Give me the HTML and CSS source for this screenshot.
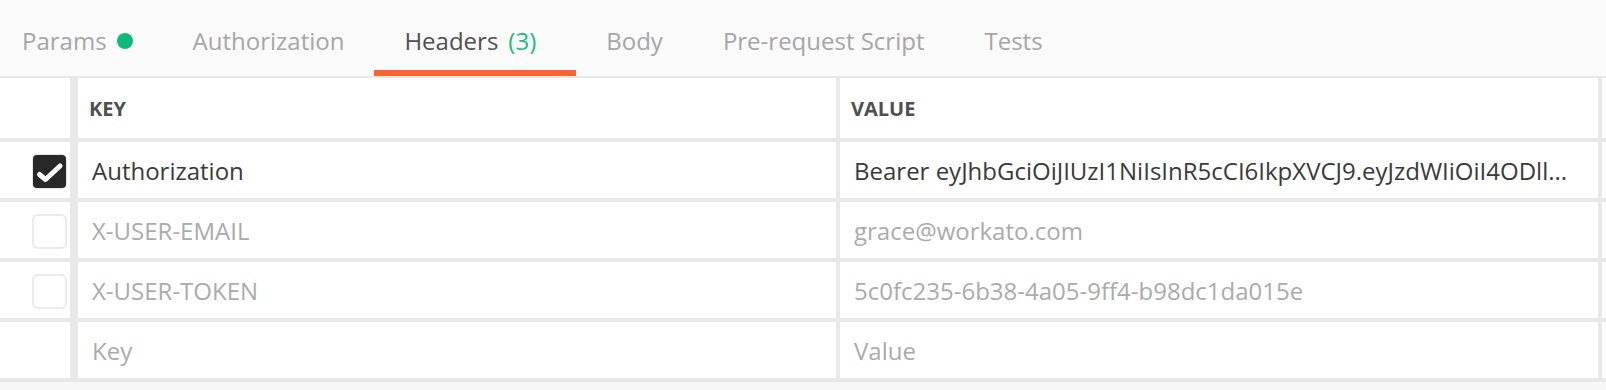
FILE: index.html
```html
<!DOCTYPE html>
<html lang="en">
<head>
<meta charset="utf-8">
<title>Headers</title>
<link rel="stylesheet" href="styles.css">
</head>
<body>
<div class="page">
  <nav class="tabs">
    <div class="tab tab-first">Params<span class="dot"></span></div>
    <div class="tab">Authorization</div>
    <div class="tab tab-active">Headers<span class="count">(3)</span></div>
    <div class="tab">Body</div>
    <div class="tab">Pre-request Script</div>
    <div class="tab">Tests</div>
  </nav>
  <div class="table">
    <div class="cell cell-check"></div>
    <div class="cell cell-head">KEY</div>
    <div class="cell cell-head cell-val">VALUE</div>
    <div class="cell"></div>

    <div class="cell cell-check"><span class="box box-on"><svg viewBox="0 0 33 33" width="33" height="33"><polyline points="6.5,19.5 12.5,24.5 27,11" fill="none" stroke="#fff" stroke-width="5" stroke-linecap="round" stroke-linejoin="round"/></svg></span></div>
    <div class="cell cell-text text-on">Authorization</div>
    <div class="cell cell-text cell-val text-on">Bearer eyJhbGciOiJIUzI1NiIsInR5cCI6IkpXVCJ9.eyJzdWIiOiI4ODll...</div>
    <div class="cell"></div>

    <div class="cell cell-check"><span class="box"></span></div>
    <div class="cell cell-text text-off">X-USER-EMAIL</div>
    <div class="cell cell-text cell-val text-off">grace@workato.com</div>
    <div class="cell"></div>

    <div class="cell cell-check"><span class="box"></span></div>
    <div class="cell cell-text text-off">X-USER-TOKEN</div>
    <div class="cell cell-text cell-val text-off">5c0fc235-6b38-4a05-9ff4-b98dc1da015e</div>
    <div class="cell"></div>

    <div class="cell cell-check"></div>
    <div class="cell cell-text text-off">Key</div>
    <div class="cell cell-text cell-val text-off">Value</div>
    <div class="cell"></div>
  </div>
</div>
</body>
</html>
```
FILE: styles.css
```css
html, body {
  margin: 0;
  padding: 0;
}
body {
  background: #f7f7f7;
  font-family: "Open Sans", "DejaVu Sans", sans-serif;
  overflow: hidden;
}
.page {
  width: 1606px;
  overflow: hidden;
}
.tabs {
  display: flex;
  height: 76px;
  background: #fafafa;
  border-bottom: 2px solid #e8e8e8;
}
.tab {
  box-sizing: border-box;
  height: 76px;
  padding: 25px 30px 0 30px;
  font-size: 24px;
  line-height: 32px;
  color: #a6a6a6;
  white-space: nowrap;
  display: flex;
  align-items: flex-start;
  border-bottom: 6px solid transparent;
}
.tab-first {
  padding-left: 22px;
}
.tab-active {
  color: #505050;
  border-bottom-color: #fb6330;
  padding-right: 40px;
}
.dot {
  width: 16px;
  height: 16px;
  border-radius: 50%;
  background: #0dba7c;
  margin: 8px 0 0 10px;
}
.count {
  color: #1fb982;
  margin-left: 10px;
}
.table {
  display: grid;
  grid-template-columns: 74px 758px 758px 200px;
  grid-template-rows: 60px 56px 56px 56px 56px;
  column-gap: 4px;
  row-gap: 4px;
  background: #e8e8e8;
  padding-bottom: 4px;
  width: 1802px;
}
.cell {
  background: #fff;
  display: flex;
  align-items: center;
  min-width: 0;
  overflow: hidden;
}
.cell-check {
  box-sizing: border-box;
  border-right: 4px solid #e8e8e8;
  padding-left: 32px;
}
.cell-head {
  font-size: 20px;
  font-weight: 700;
  color: #4f4f4f;
  padding-left: 11px;
}
.cell-text {
  font-size: 24px;
  padding-left: 14px;
  white-space: nowrap;
}
.text-on {
  color: #3a3a3a;
}
.text-off {
  color: #ababab;
}
.box {
  box-sizing: border-box;
  width: 35px;
  height: 35px;
  border: 2px solid #ebebeb;
  border-radius: 6px;
  display: flex;
  align-items: center;
  justify-content: center;
  margin-top: 2px;
}
.box-on {
  background: #282828;
  border: none;
  box-shadow: 0 0 0 1px #e6e6e6;
  width: 33px;
  height: 33px;
  border-radius: 4px;
  margin-left: 1px;
}
.box-on svg {
  display: block;
}
```
